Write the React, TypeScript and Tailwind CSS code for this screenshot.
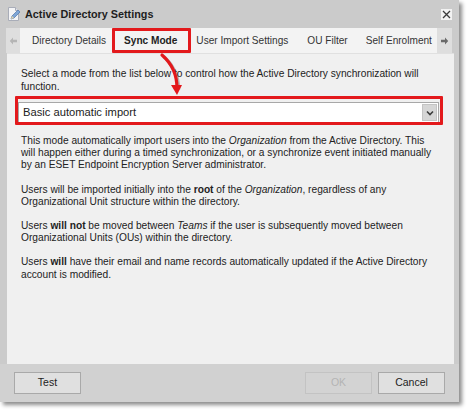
import React from 'react';

const font = { fontFamily: '"Liberation Sans", Arial, sans-serif' };

const DocIcon: React.FC = () => (
  <svg width="15" height="16" viewBox="0 0 15 16">
    <path d="M1.5 1.5h7l3 3v10h-10z" fill="#f4f4f6" stroke="#a9adb8" />
    <path d="M8.5 1.5v3h3" fill="#e2e4ea" stroke="#a9adb8" />
    <path d="M4 13l1-3 6-6 2 2-6 6z" fill="#7fa6d6" stroke="#5b7fb3" strokeWidth="0.8" />
    <path d="M4 13l1-3 2 2z" fill="#e9d7a8" />
  </svg>
);

const App: React.FC = () => {
  return (
    <div className="relative w-[474px] h-[417px] bg-white overflow-hidden" style={font}>
      <div className="flex flex-col w-[459px] h-[402px] bg-[#cbcbcb] shadow-[3px_3px_4px_rgba(0,0,0,0.45)]">
        {/* title bar */}
        <div className="flex items-center h-[28px] pl-[7px] pr-[7px]">
          <DocIcon />
          <span className="ml-[3px] text-[10.8px] font-bold text-[#1e1e1e] whitespace-nowrap">Active Directory Settings</span>
          <div className="ml-auto flex items-center justify-center w-[11px] h-[11px] bg-[#f2f2f2] text-[#333]">
            <svg width="9" height="9" viewBox="0 0 9 9">
              <path d="M1 1l7 7M8 1l-7 7" stroke="#3a3a3a" strokeWidth="1.3" />
            </svg>
          </div>
        </div>

        {/* tab row */}
        <div className="flex items-center h-[25px] ml-[6px] mr-[7px] bg-[#f3f3f3] text-[10.1px] text-[#333] whitespace-nowrap">
          <div className="flex shrink-0 items-center justify-center w-[14px] h-[25px] bg-[#dedede]">
            <svg width="9" height="8" viewBox="0 0 9 8">
              <path d="M4 0.5L0.8 4 4 7.5V5.2h4V2.8H4z" fill="#b5b5b5" />
            </svg>
          </div>
          <span className="ml-[12px]">Directory Details</span>
          <span className="ml-[18px] font-bold text-[#222]">Sync Mode</span>
          <span className="ml-[19px]">User Import Settings</span>
          <span className="ml-[19px]">OU Filter</span>
          <span className="ml-[18px]">Self Enrolment</span>
          <div className="ml-auto flex shrink-0 items-center justify-center w-[15px] h-[25px] bg-[#dedede]">
            <svg width="9" height="8" viewBox="0 0 9 8">
              <path d="M5 0.5L8.2 4 5 7.5V5.2H1V2.8h4z" fill="#6a6a6a" />
            </svg>
          </div>
        </div>

        {/* content */}
        <div className="flex-1 ml-[7px] mr-[5px] bg-[#f0f0f0] border-t border-[#e0e0e0] pl-[14px] pr-[10px] pt-[13px] text-[10.2px] leading-[12.2px] text-[#222]">
          <p className="whitespace-nowrap leading-[13px]">
            Select a mode from the list below to control how the Active Directory synchronization will
            <br />
            function.
          </p>
          <div className="flex items-center h-[21px] mt-[9px] -ml-[3px] mr-[5px] bg-white border border-[#a8a8a8] pr-[1px]">
            <span className="pl-[4px] text-[11.2px] text-[#222]">Basic automatic import</span>
            <div className="ml-auto flex items-center justify-center w-[15px] h-[17px] bg-[#d6d6d6] border border-[#c4c4c4]">
              <svg width="8" height="6" viewBox="0 0 8 6">
                <path d="M1 1.5l3 3 3-3" stroke="#3c3c3c" strokeWidth="1.6" fill="none" />
              </svg>
            </div>
          </div>
          <p className="mt-[12px] whitespace-nowrap">
            This mode automatically import users into the <i>Organization</i> from the Active Directory. This
            <br />
            will happen either during a timed synchronization, or a synchronize event initiated manually
            <br />
            by an ESET Endpoint Encryption Server administrator.
          </p>
          <p className="mt-[12px] whitespace-nowrap">
            Users will be imported initially into the <b>root</b> of the <i>Organization</i>, regardless of any
            <br />
            Organizational Unit structure within the directory.
          </p>
          <p className="mt-[12px] whitespace-nowrap">
            Users <b>will not</b> be moved between <i>Teams</i> if the user is subsequently moved between
            <br />
            Organizational Units (OUs) within the directory.
          </p>
          <p className="mt-[12px] whitespace-nowrap">
            Users <b>will</b> have their email and name records automatically updated if the Active Directory
            <br />
            account is modified.
          </p>
        </div>

        {/* footer */}
        <div className="flex items-center h-[38px] px-[14px] bg-[#d1d1d1] text-[10.5px]">
          <button className="w-[67px] h-[22px] bg-[#e0e0e0] border border-[#a9a9a9] text-[#222]">Test</button>
          <button className="ml-auto w-[67px] h-[22px] bg-[#d3d3d3] border border-[#c3c3c3] text-[#b3b3b3]">OK</button>
          <button className="ml-[6px] w-[67px] h-[22px] bg-[#e0e0e0] border border-[#a9a9a9] text-[#222]">Cancel</button>
        </div>
      </div>

      {/* annotations */}
      <div className="absolute left-[112px] top-[28px] w-[79px] h-[25px] border-[3px] border-[#e3191c] rounded-[1px]" />
      <div className="absolute left-[15px] top-[96px] w-[428px] h-[29px] border-[3px] border-[#e3191c] rounded-[1px]" />
      <svg className="absolute left-[150px] top-[52px]" width="40" height="48" viewBox="0 0 40 48">
        <path d="M12 3C20 10 27 20 27 36" stroke="rgba(0,0,0,0.25)" strokeWidth="3.5" fill="none" transform="translate(1.5,1.5)" />
        <path d="M12 3C20 10 27 20 27 36" stroke="#e3191c" strokeWidth="3.2" fill="none" strokeLinecap="round" />
        <path d="M21 33l6 10 5-10z" fill="#e3191c" />
      </svg>
    </div>
  );
};

export default App;
